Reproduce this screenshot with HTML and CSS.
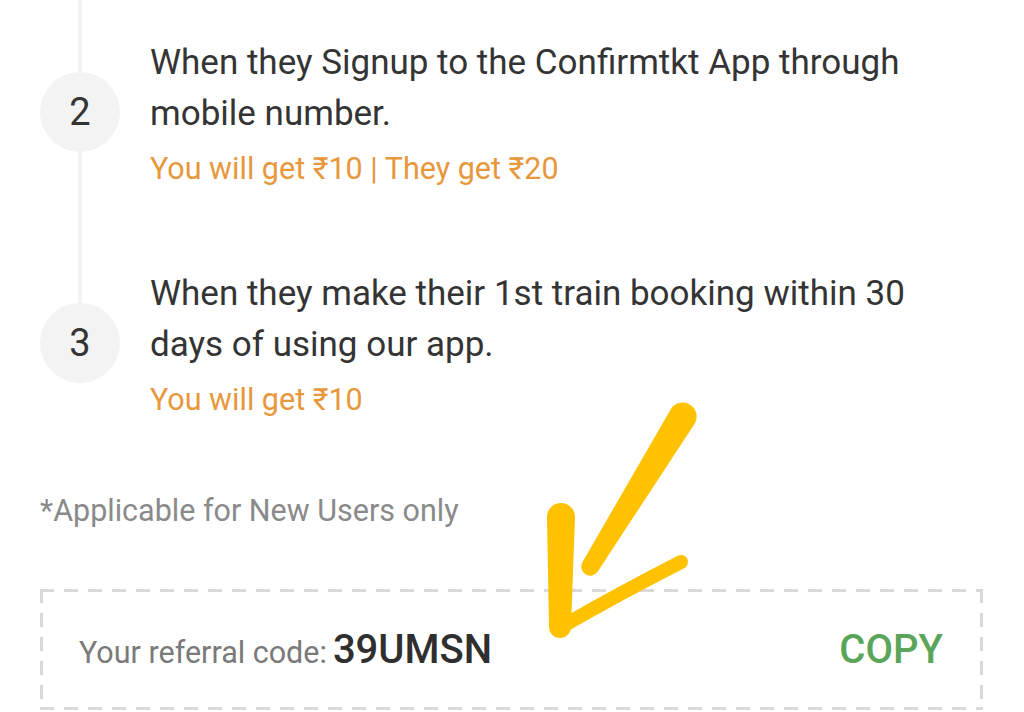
FILE: index.html
```html
<!DOCTYPE html>
<html>
<head>
<meta charset="utf-8">
<link rel="stylesheet" href="styles.css">
</head>
<body>
<div class="page">
  <div class="steps">
    <div class="step">
      <div class="marker">
        <span class="line"></span>
        <span class="circle">2</span>
        <span class="line"></span>
      </div>
      <div class="body first">
        <p class="title">When they Signup to the Confirmtkt App through mobile number.</p>
        <p class="reward">You will get ₹10 | They get ₹20</p>
      </div>
    </div>
    <div class="step">
      <div class="marker">
        <span class="line"></span>
        <span class="circle">3</span>
        <span class="line none"></span>
      </div>
      <div class="body last">
        <p class="title">When they make their 1st train booking within 30 days of using our app.</p>
        <p class="reward">You will get ₹10</p>
      </div>
    </div>
  </div>
  <p class="note">*Applicable for New Users only</p>
  <div class="code-box">
    <div class="code">
      <span class="label">Your referral code:</span>
      <span class="value">39UMSN</span>
    </div>
    <span class="copy">COPY</span>
  </div>
</div>
<svg class="arrow" width="1024" height="712" viewBox="0 0 1024 712">
  <path fill="#fec200" d="M 671.2 408.5 A 14 14 0 0 1 694.8 423.5 L 597.6 571.8 A 9 9 0 0 1 582.4 562.2 Z"/>
  <path fill="#fec200" d="M 547 517 A 14 14 0 0 1 575 517 L 571 627 A 11 11 0 0 1 549 627 Z"/>
  <path fill="none" stroke="#fec200" stroke-width="14" stroke-linecap="round" d="M 561 627 Q 622 592 681 562"/>
</svg>
</body>
</html>
```

FILE: styles.css
```css
html, body {
  margin: 0;
  padding: 0;
  background: #ffffff;
}

body {
  font-family: Roboto, "Liberation Sans", sans-serif;
  width: 1024px;
  height: 712px;
  overflow: hidden;
  position: relative;
}

.page {
  padding: 0 41px 0 40px;
}

.steps {
  display: flex;
  flex-direction: column;
}

.step {
  display: grid;
  grid-template-columns: 80px 1fr;
  column-gap: 30px;
}

.marker {
  display: flex;
  flex-direction: column;
  align-items: center;
}

.line {
  flex: 1;
  width: 4px;
  background: #f2f2f2;
}

.line.none {
  background: transparent;
}

.circle {
  width: 80px;
  height: 80px;
  border-radius: 50%;
  background: #f3f3f3;
  display: flex;
  align-items: center;
  justify-content: center;
  font-size: 38px;
  color: #333333;
}

.body.first {
  padding: 37px 0 37px;
}

.body.last {
  padding: 44px 0 44px;
}

.title {
  margin: 0;
  font-size: 35px;
  line-height: 51px;
  color: #343434;
}

.reward {
  margin: 12px 0 0;
  font-size: 30.5px;
  line-height: 36px;
  color: #e8983c;
}

.note {
  margin: 31px 0 0;
  font-size: 30.5px;
  line-height: 36px;
  color: #8a8a8a;
}

.code-box {
  margin-top: 60px;
  height: 121px;
  box-sizing: border-box;
  padding: 0 40px 0 39px;
  display: flex;
  align-items: center;
  justify-content: space-between;
  background-image:
    repeating-linear-gradient(90deg, #d9d9d9 0 14px, transparent 14px 24px),
    repeating-linear-gradient(90deg, #d9d9d9 0 14px, transparent 14px 24px),
    repeating-linear-gradient(180deg, #d9d9d9 0 14px, transparent 14px 24px),
    repeating-linear-gradient(180deg, #d9d9d9 0 14px, transparent 14px 24px);
  background-size: 100% 3px, 100% 3px, 3px 100%, 3px 100%;
  background-position: 0 0, 0 100%, 0 0, 100% 0;
  background-repeat: no-repeat;
}

.code {
  display: flex;
  align-items: baseline;
  gap: 6px;
}

.label {
  font-size: 30.5px;
  color: #7a7a7a;
}

.value {
  font-size: 40px;
  font-weight: 500;
  color: #2f2f2f;
}

.copy {
  font-size: 40px;
  font-weight: 500;
  color: #5ba55b;
}

.arrow {
  position: absolute;
  left: 0;
  top: 0;
  pointer-events: none;
}
```
